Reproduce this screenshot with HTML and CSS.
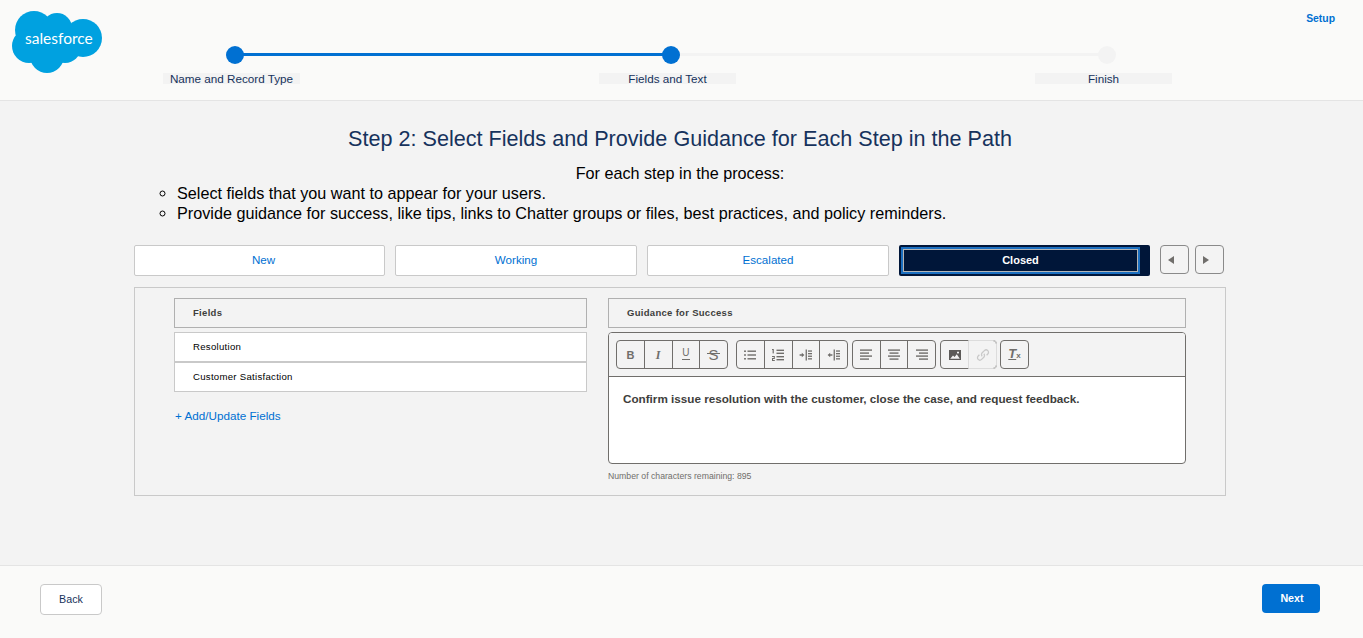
FILE: index.html
```html
<!DOCTYPE html>
<html lang="en">
<head>
<meta charset="utf-8">
<title>Step 2: Select Fields</title>
<link rel="stylesheet" href="styles.css">
</head>
<body>
<header class="header">
  <div class="logo">
    <svg class="logo-cloud" width="90" height="62" viewBox="12 11 90 62" aria-hidden="true">
      <g fill="#00a1e0">
        <circle cx="34" cy="30" r="19"/><circle cx="57" cy="28" r="15"/><circle cx="83" cy="38" r="19"/>
        <circle cx="65" cy="47" r="16"/><circle cx="47" cy="56" r="17"/><circle cx="29" cy="46" r="17"/>
        <rect x="30" y="25" width="50" height="30"/>
      </g>
    </svg>
    <span class="logo-text">salesforce</span>
  </div>
  <div class="steps">
    <div class="step step-done"><span class="dot"></span><span class="step-label">Name and Record Type</span></div>
    <div class="step step-done"><span class="dot"></span><span class="step-label">Fields and Text</span></div>
    <div class="step"><span class="dot"></span><span class="step-label">Finish</span></div>
  </div>
  <a class="setup">Setup</a>
</header>

<main class="main">
  <h1 class="title">Step 2: Select Fields and Provide Guidance for Each Step in the Path</h1>
  <p class="intro">For each step in the process:</p>
  <ul class="intro-list">
    <li>Select fields that you want to appear for your users.</li>
    <li>Provide guidance for success, like tips, links to Chatter groups or files, best practices, and policy reminders.</li>
  </ul>

  <div class="tabs">
    <a class="tab tab-new">New</a>
    <a class="tab">Working</a>
    <a class="tab">Escalated</a>
    <a class="tab tab-active"><span class="tab-focus">Closed</span></a>
    <button class="arrow"><span class="tri tri-left"></span></button>
    <button class="arrow"><span class="tri tri-right"></span></button>
  </div>

  <section class="panel">
    <div class="col-fields">
      <div class="col-head">Fields</div>
      <div class="field-row">Resolution</div>
      <div class="field-row">Customer Satisfaction</div>
      <a class="add-link">+ Add/Update Fields</a>
    </div>
    <div class="col-guide">
      <div class="col-head">Guidance for Success</div>
      <div class="editor">
        <div class="toolbar">
          <div class="group g4">
            <span class="btn t-b">B</span>
            <span class="btn t-i">I</span>
            <span class="btn t-u">U</span>
            <span class="btn t-s">S</span>
          </div>
          <div class="group g4 gap-wide">
            <span class="btn"><svg class="ico" viewBox="0 0 14 14"><g fill="#706e6b"><rect x="1" y="2.5" width="2" height="1.4"/><rect x="1" y="6.3" width="2" height="1.4"/><rect x="1" y="10.1" width="2" height="1.4"/><rect x="4.5" y="2.5" width="8.5" height="1.4"/><rect x="4.5" y="6.3" width="8.5" height="1.4"/><rect x="4.5" y="10.1" width="8.5" height="1.4"/></g></svg></span>
            <span class="btn"><svg class="ico" viewBox="0 0 14 14"><g fill="#706e6b"><rect x="1.6" y="1" width="1.2" height="4.4"/><rect x="1" y="1" width="1" height="1"/><rect x="1" y="8" width="2.8" height="1"/><rect x="2.8" y="8.6" width="1" height="1.6"/><rect x="1" y="10" width="2.8" height="1"/><rect x="1" y="10.6" width="1" height="1.6"/><rect x="1" y="12" width="2.8" height="1"/><rect x="5.5" y="1.6" width="7.5" height="1.4"/><rect x="5.5" y="4.6" width="7.5" height="1.4"/><rect x="5.5" y="8" width="7.5" height="1.4"/><rect x="5.5" y="11" width="7.5" height="1.4"/></g></svg></span>
            <span class="btn"><svg class="ico" viewBox="0 0 14 14"><g fill="#706e6b"><path d="M.6 6.3h2.2V4.7L5.4 7 2.8 9.3V7.7H.6z"/><rect x="6.6" y="1.5" width="1.3" height="11"/><rect x="9" y="2.4" width="4" height="1.3"/><rect x="9" y="5" width="4" height="1.3"/><rect x="9" y="7.6" width="4" height="1.3"/><rect x="9" y="10.2" width="4" height="1.3"/></g></svg></span>
            <span class="btn"><svg class="ico" viewBox="0 0 14 14"><g fill="#706e6b"><path d="M5.4 6.3H3.2V4.7L.6 7l2.6 2.3V7.7h2.2z"/><rect x="6.6" y="1.5" width="1.3" height="11"/><rect x="9" y="2.4" width="4" height="1.3"/><rect x="9" y="5" width="4" height="1.3"/><rect x="9" y="7.6" width="4" height="1.3"/><rect x="9" y="10.2" width="4" height="1.3"/></g></svg></span>
          </div>
          <div class="group g3">
            <span class="btn"><svg class="ico" viewBox="0 0 14 14"><g fill="#706e6b"><rect x="1" y="1.4" width="12" height="1.4"/><rect x="1" y="4.4" width="9" height="1.4"/><rect x="1" y="7.4" width="12" height="1.4"/><rect x="1" y="10.4" width="9" height="1.4"/></g></svg></span>
            <span class="btn"><svg class="ico" viewBox="0 0 14 14"><g fill="#706e6b"><rect x="1" y="1.4" width="12" height="1.4"/><rect x="2.5" y="4.4" width="9" height="1.4"/><rect x="1" y="7.4" width="12" height="1.4"/><rect x="2.5" y="10.4" width="9" height="1.4"/></g></svg></span>
            <span class="btn"><svg class="ico" viewBox="0 0 14 14"><g fill="#706e6b"><rect x="1" y="1.4" width="12" height="1.4"/><rect x="4" y="4.4" width="9" height="1.4"/><rect x="1" y="7.4" width="12" height="1.4"/><rect x="4" y="10.4" width="9" height="1.4"/></g></svg></span>
          </div>
          <div class="group g2">
            <span class="btn"><svg class="ico" viewBox="0 0 14 14"><path fill="#5c5a58" fill-rule="evenodd" d="M1 2h12v10H1zM2.2 10.8h9.6L8.8 6.2 6.6 9 5 7.4zM10 3.4a1.1 1.1 0 1 0 .01 0z"/></svg></span>
            <span class="btn btn-off"><svg class="ico" viewBox="0 0 14 14"><g fill="none" stroke="#c9c9c9" stroke-width="1.3"><path d="M6.2 8.2a2.4 2.4 0 0 1 0-3.4l2.2-2.2a2.4 2.4 0 0 1 3.4 3.4L10.6 7.2"/><path d="M7.8 5.8a2.4 2.4 0 0 1 0 3.4l-2.2 2.2a2.4 2.4 0 0 1-3.4-3.4L3.4 6.8"/></g></svg></span>
          </div>
          <div class="group g1">
            <span class="btn t-clear"><span class="t-letter">T</span><span class="t-x">x</span></span>
          </div>
        </div>
        <div class="editor-body">Confirm issue resolution with the customer, close the case, and request feedback.</div>
      </div>
      <div class="char-count">Number of characters remaining: 895</div>
    </div>
  </section>
</main>

<footer class="footer">
  <button class="btn-back">Back</button>
  <button class="btn-next">Next</button>
</footer>
</body>
</html>
```

FILE: styles.css
```css
* { box-sizing: border-box; }
html, body { margin: 0; padding: 0; }
body {
  min-height: 100vh;
  display: flex;
  flex-direction: column;
  font-family: "Liberation Sans", Arial, sans-serif;
  background: #f3f3f3;
  color: #000;
}

/* header */
.header {
  height: 101px;
  flex: none;
  background: #fafaf9;
  border-bottom: 1px solid #e4e4e4;
  display: flex;
  align-items: flex-start;
  padding: 11px 0 0 12px;
}
.logo { position: relative; width: 90px; height: 62px; flex: none; }
.logo-cloud { display: block; }
.logo-text {
  position: absolute;
  left: 13px;
  top: 16px;
  font-family: "Lato", sans-serif;
  font-size: 15.5px;
  line-height: 22px;
  color: #fff;
}
.steps {
  position: relative;
  display: grid;
  grid-template-columns: repeat(3, 137px);
  column-gap: 299px;
  margin-left: 61px;
  margin-top: 35px;
  flex: none;
}
.steps::before {
  content: "";
  position: absolute;
  left: 72px;
  width: 871px;
  top: 7px;
  height: 3px;
  background: linear-gradient(to right, #0070d2 50%, #f3f3f3 50%);
}
.step { position: relative; display: flex; flex-direction: column; }
.dot {
  width: 18px;
  height: 18px;
  border-radius: 50%;
  background: #f3f3f3;
  margin: 0 0 9px 63px;
}
.step-done .dot { background: #0070d2; }
.step-label {
  height: 11px;
  background: #f3f3f3;
  font-size: 11.7px;
  line-height: 11px;
  text-align: center;
  color: #16325c;
}
.setup {
  margin-left: auto;
  margin-right: 28px;
  margin-top: 1px;
  font-size: 10.4px;
  line-height: 13px;
  font-weight: 700;
  color: #0070d2;
}

/* main */
.main {
  flex: 1;
  width: 1092px;
  margin-left: 134px;
  padding-top: 26px;
}
.title {
  margin: 0 0 12px;
  font-size: 21.6px;
  line-height: 24px;
  font-weight: 400;
  text-align: center;
  color: #16325c;
}
.intro {
  margin: 0;
  font-size: 16.2px;
  line-height: 20px;
  text-align: center;
}
.intro-list {
  margin: 0;
  padding-left: 43px;
  list-style: circle;
  font-size: 16.2px;
  line-height: 20px;
}
.tabs {
  display: grid;
  grid-template-columns: 251px 242px 242px 251px 29px 29px;
  column-gap: 10px;
  margin-top: 22px;
}
.tab {
  height: 31px;
  background: #fff;
  border: 1px solid #c9c9c9;
  border-radius: 2px;
  font-size: 11.6px;
  line-height: 27px;
  text-align: center;
  color: #0070d2;
}
.tab-new { padding-left: 8px; }
.tab-active {
  display: flex;
  padding: 2px 10px 2px 2px;
  background: #001639;
  border: 0;
}
.tab-focus {
  flex: 1;
  border: 2px solid #1b6fc0;
  box-shadow: inset 0 0 0 1px #b5b5b5;
  color: #fff;
  font-size: 11px;
  font-weight: 700;
  line-height: 22px;
}
.arrow {
  width: 29px;
  height: 29px;
  padding: 0 8px 0 0;
  background: #f3f3f3;
  border: 1px solid #8a8a8a;
  border-radius: 4px;
  display: flex;
  align-items: center;
  justify-content: center;
}
.arrow:last-child { margin-left: -4px; }
.tri { width: 0; height: 0; border-top: 4.5px solid transparent; border-bottom: 4.5px solid transparent; }
.tri-left { border-right: 6px solid #706e6b; }
.tri-right { border-left: 6px solid #706e6b; }

/* panel */
.panel {
  display: grid;
  grid-template-columns: 413px 578px;
  column-gap: 21px;
  height: 209px;
  margin-top: 11px;
  padding: 10px 0 0 39px;
  border: 1px solid #c9c9c9;
}
.col-head {
  height: 30px;
  border: 1px solid #b0b0b0;
  padding-left: 18px;
  font-size: 9.5px;
  line-height: 28px;
  font-weight: 700;
  letter-spacing: 0.3px;
  color: #3e3e3c;
  margin-bottom: 4px;
}
.field-row {
  height: 30px;
  background: #fff;
  border: 1px solid #c9c9c9;
  padding-left: 18px;
  font-size: 9.6px;
  line-height: 28px;
  letter-spacing: 0.28px;
  font-weight: 400;
  color: #000;
}
.add-link {
  display: block;
  margin: 16px 0 0 1px;
  font-size: 11.7px;
  line-height: 16px;
  color: #0070d2;
}
.editor {
  height: 132px;
  border: 1px solid #706e6b;
  border-radius: 4px;
  overflow: hidden;
  background: #fff;
}
.toolbar {
  height: 44px;
  background: #f3f3f3;
  border-bottom: 1px solid #706e6b;
  display: flex;
  align-items: flex-start;
  padding: 7px 0 0 7px;
}
.group {
  display: flex;
  height: 29px;
  border: 1px solid #706e6b;
  border-radius: 4px;
  margin-right: 4px;
}
.g4 { width: 112px; }
.g3 { width: 84px; }
.g2 { width: 57px; margin-right: 3px; }
.g1 { width: 29px; }
.g4:first-child { margin-right: 8px; }
.btn {
  flex: 1;
  position: relative;
  display: flex;
  align-items: center;
  justify-content: center;
  border-left: 1px solid #706e6b;
  color: #706e6b;
  font-size: 12px;
  line-height: 14px;
}
.btn:first-child { border-left: 0; }
.btn-off {
  margin: -1px -1px -1px 0;
  border: 1px solid #dcdcdc;
  border-radius: 0 4px 4px 0;
}
.ico { width: 14px; height: 14px; display: block; }
.t-b { font-weight: 700; font-size: 11px; }
.t-i { font-family: "Liberation Serif", serif; font-style: italic; font-weight: 700; font-size: 12px; }
.t-u { font-size: 10px; padding-bottom: 3px; }
.t-u::after {
  content: "";
  position: absolute;
  left: 9px;
  width: 8px;
  top: 18px;
  height: 1px;
  background: #706e6b;
}
.t-s { font-size: 15px; }
.t-s::after {
  content: "";
  position: absolute;
  left: 7px;
  width: 13px;
  top: 12px;
  height: 1px;
  background: #706e6b;
}
.t-clear { font-size: 13px; align-items: baseline; padding-top: 6px; }
.t-letter { font-style: italic; font-weight: 700; text-decoration: underline; }
.t-x { font-size: 8px; font-weight: 700; }
.editor-body {
  padding: 13px 14px 0;
  font-size: 11.7px;
  line-height: 18px;
  font-weight: 700;
  color: #3e3e3c;
}
.char-count {
  margin-top: 7px;
  font-size: 8.7px;
  line-height: 11px;
  color: #706e6b;
}

/* footer */
.footer {
  height: 73px;
  flex: none;
  background: #fafaf9;
  border-top: 1px solid #e4e4e4;
  display: flex;
  align-items: flex-start;
  justify-content: space-between;
  padding: 18px 43px 0 40px;
}
.btn-back, .btn-next {
  font-family: inherit;
  font-size: 10.7px;
  padding: 0 0 2px;
  border-radius: 4px;
}
.btn-back {
  width: 62px;
  height: 31px;
  background: #fff;
  border: 1px solid #c9c9c9;
  color: #16325c;
}
.btn-next {
  width: 58px;
  height: 29px;
  padding-left: 2px;
  background: #0070d2;
  border: 0;
  color: #fff;
  font-weight: 700;
}
```
